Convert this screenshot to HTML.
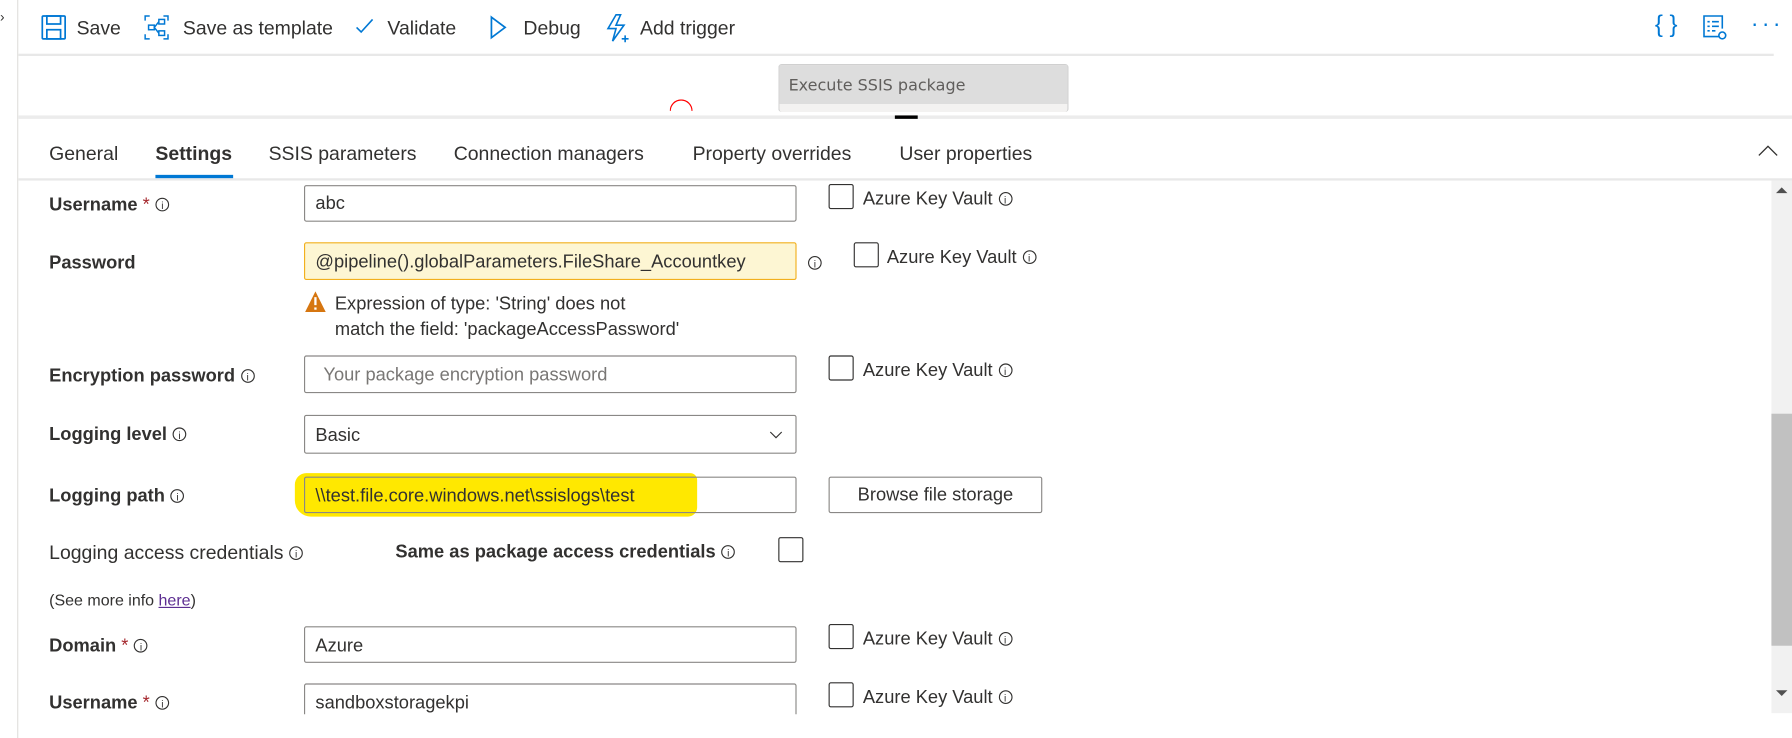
<!DOCTYPE html>
<html><head><meta charset="utf-8"><style>
html,body{margin:0;padding:0;width:1792px;height:738px;overflow:hidden;background:#fff}
#w{position:absolute;left:0;top:0;width:1568px;height:646px;overflow:hidden;transform:scale(1.142857);transform-origin:0 0;font-family:"Liberation Sans",sans-serif;color:#323130}
.a{position:absolute;white-space:nowrap}
.tb{font-size:17px;top:15px;color:#323130}
.lab{font-size:16px;font-weight:bold;left:43px}
.inp{position:absolute;left:266px;width:431px;height:30px;border:1px solid #8a8886;border-radius:2px;box-sizing:border-box;font-size:16px;padding:6px 9px}
.cb{position:absolute;width:22px;height:22px;border:1px solid #323130;border-radius:2px;box-sizing:border-box}
.akv{font-size:16px}
.i{display:inline-block;width:12px;height:12px;border:1px solid #323130;border-radius:50%;font-size:9px;line-height:12px;text-align:center;vertical-align:1px;margin-left:5px;font-weight:normal;box-sizing:border-box}
.tab{font-size:17px;top:125px;color:#323130}
.req{color:#a4262c;font-weight:normal}
</style></head><body><div id="w">
<div class="a" style="left:0;top:8px;font-size:12px">›</div>
<div class="a" style="left:15px;top:0;width:1px;height:646px;background:#e1dfdd"></div>
<div class="a" style="left:16px;top:47px;width:1536px;height:2px;background:#e8e8e8"></div>
<svg class="a" style="left:36px;top:13px" width="22" height="22" viewBox="0 0 22 22" fill="none" stroke="#0078d4" stroke-width="1.5"><rect x="1" y="1" width="20" height="20" rx="1"/><rect x="5" y="1" width="12" height="7"/><rect x="5" y="13" width="12" height="8"/></svg>
<div class="a tb" style="left:67px">Save</div>
<svg class="a" style="left:126px;top:13px" width="22" height="22" viewBox="0 0 22 22" fill="none" stroke="#0078d4" stroke-width="1.3"><path d="M1 5V1h4M17 1h4v4M21 17v4h-4M5 21H1v-4"/><rect x="4" y="9" width="5" height="4"/><rect x="13" y="4" width="5" height="4"/><rect x="13" y="14" width="5" height="4"/><path d="M9 11l4-5M9 11l4 5"/></svg>
<div class="a tb" style="left:160px">Save as template</div>
<svg class="a" style="left:311px;top:15px" width="16" height="16" viewBox="0 0 16 16" fill="none" stroke="#0078d4" stroke-width="1.4"><path d="M1 9l4 4 10-11"/></svg>
<div class="a tb" style="left:339px">Validate</div>
<svg class="a" style="left:428px;top:13px" width="16" height="22" viewBox="0 0 16 22" fill="none" stroke="#0078d4" stroke-width="1.5"><path d="M2 2l12 9-12 9z"/></svg>
<div class="a tb" style="left:458px">Debug</div>
<svg class="a" style="left:530px;top:12px" width="22" height="26" viewBox="0 0 22 26" fill="none" stroke="#0078d4" stroke-width="1.4"><path d="M9 1L2 13h7l-3 11 10-14h-7l4-9z"/><path d="M17 19v6M14 22h6"/></svg>
<div class="a tb" style="left:560px">Add trigger</div>
<div class="a" style="left:1448px;top:10px;font-size:21px;color:#0078d4">{ }</div>
<svg class="a" style="left:1490px;top:13px" width="22" height="24" viewBox="0 0 22 24" fill="none" stroke="#0078d4" stroke-width="1.4"><path d="M14 19H1V1h16v11"/><path d="M4 6h2M8 6h6M4 10h2M8 10h6M4 14h2M8 14h3"/><circle cx="17" cy="18" r="3"/></svg>
<div class="a" style="left:1532px;top:10px;font-size:20px;color:#0078d4;letter-spacing:3px">···</div>
<div class="a" style="left:681px;top:56px;width:254px;height:42px;border:1px solid #d0d0d0;border-radius:3px;border-bottom:none;background:#f3f2f1;box-sizing:border-box">
<div style="background:#ddd;height:34px;color:#605e5c;padding:10px 8px 0;box-sizing:border-box;font-family:'DejaVu Sans',sans-serif;font-size:14px">Execute SSIS package</div></div>
<div class="a" style="left:586px;top:87px;width:20px;height:20px;border:1.5px solid red;border-radius:50%;box-sizing:border-box;clip-path:inset(0 0 50% 0)"></div>
<div class="a" style="left:16px;top:101px;width:1552px;height:3px;background:#ececec"></div>
<div class="a" style="left:783px;top:101px;width:20px;height:3px;background:#000"></div>
<div class="a tab" style="left:43px">General</div>
<div class="a tab" style="left:136px;font-weight:bold;color:#323130">Settings</div>
<div class="a" style="left:136px;top:153px;width:68px;height:3px;background:#0078d4"></div>
<div class="a tab" style="left:235px">SSIS parameters</div>
<div class="a tab" style="left:397px">Connection managers</div>
<div class="a tab" style="left:606px">Property overrides</div>
<div class="a tab" style="left:787px">User properties</div>
<svg class="a" style="left:1538px;top:127px" width="18" height="10" viewBox="0 0 18 10" fill="none" stroke="#323130" stroke-width="1.2"><path d="M1 9l8-8 8 8"/></svg>
<div class="a" style="left:16px;top:156px;width:1552px;height:2px;background:#e8e8e8"></div>
<div class="a" style="left:1550px;top:158px;width:18px;height:466px;background:#f1f1f1"></div>
<div class="a" style="left:1550px;top:362px;width:18px;height:203px;background:#c1c1c1"></div>
<div class="a" style="left:1554px;top:164px;width:0;height:0;border-left:5px solid transparent;border-right:5px solid transparent;border-bottom:5px solid #505050"></div>
<div class="a" style="left:1554px;top:604px;width:0;height:0;border-left:5px solid transparent;border-right:5px solid transparent;border-top:5px solid #505050"></div>
<div class="a" style="left:0;top:158px;width:1550px;height:467px;overflow:hidden">
<div style="position:absolute;left:0;top:-158px;width:1550px;height:625px">
<div class="a lab" style="top:171px">Username <span class="req">*</span><span class="i">i</span></div>
<div class="inp" style="top:162px;height:32px;padding-top:7px">abc</div>
<div class="cb" style="left:725px;top:161px"></div><div class="a akv" style="left:755px;top:166px">Azure Key Vault<span class="i">i</span></div>

<div class="a lab" style="top:222px">Password</div>
<div class="inp" style="top:212px;background:#fdf6d3;border-color:#f2b01e;height:33px;padding-top:8px">@pipeline().globalParameters.FileShare_Accountkey</div>
<div class="a" style="left:702px;top:222px"><span class="i">i</span></div>
<div class="cb" style="left:747px;top:212px"></div><div class="a akv" style="left:776px;top:217px">Azure Key Vault<span class="i">i</span></div>
<svg class="a" style="left:266px;top:254px" width="20" height="20" viewBox="0 0 20 20"><path d="M10 1L19 19H1z" fill="#d67610"/><rect x="9" y="6" width="2" height="7" fill="#fff"/><rect x="9" y="15" width="2" height="2" fill="#fff"/></svg>
<div class="a" style="left:293px;top:258px;font-size:16px">Expression of type: 'String' does not</div>
<div class="a" style="left:293px;top:280px;font-size:16px">match the field: 'packageAccessPassword'</div>

<div class="a lab" style="top:321px">Encryption password<span class="i">i</span></div>
<div class="inp" style="top:311px;height:33px;padding:8px 16px;color:#797775">Your package encryption password</div>
<div class="cb" style="left:725px;top:311px"></div><div class="a akv" style="left:755px;top:316px">Azure Key Vault<span class="i">i</span></div>

<div class="a lab" style="top:372px">Logging level<span class="i">i</span></div>
<div class="inp" style="top:363px;height:34px;padding-top:9px">Basic</div>
<svg class="a" style="left:673px;top:377px" width="12" height="8" viewBox="0 0 12 8" fill="none" stroke="#323130"><path d="M1 1l5 5 5-5"/></svg>

<div class="a" style="left:258px;top:414px;width:352px;height:38px;background:#ffe800;border-radius:10px 6px 8px 14px"></div>
<div class="a lab" style="top:426px">Logging path<span class="i">i</span></div>
<div class="inp" style="top:417px;height:32px;padding-top:8px;background:transparent">\\test.file.core.windows.net\ssislogs\test</div>
<div class="a" style="left:725px;top:417px;width:187px;height:32px;border:1px solid #8a8886;border-radius:2px;box-sizing:border-box;font-size:16px;text-align:center;line-height:31px">Browse file storage</div>

<div class="a" style="left:43px;top:474px;font-size:17px">Logging access credentials<span class="i">i</span></div>
<div class="a" style="left:346px;top:475px;font-size:16px;font-weight:bold">Same as package access credentials<span class="i">i</span></div>
<div class="cb" style="left:681px;top:470px"></div>

<div class="a" style="left:43px;top:517px;font-size:14px">(See more info <span style="color:#5c2d91;text-decoration:underline">here</span>)</div>

<div class="a lab" style="top:557px">Domain <span class="req">*</span><span class="i">i</span></div>
<div class="inp" style="top:548px;height:32px;padding-top:8px">Azure</div>
<div class="cb" style="left:725px;top:546px"></div><div class="a akv" style="left:755px;top:551px">Azure Key Vault<span class="i">i</span></div>

<div class="a lab" style="top:607px">Username <span class="req">*</span><span class="i">i</span></div>
<div class="inp" style="top:598px;height:32px;padding-top:8px">sandboxstoragekpi</div>
<div class="cb" style="left:725px;top:597px"></div><div class="a akv" style="left:755px;top:602px">Azure Key Vault<span class="i">i</span></div>
</div></div>
</div></body></html>
